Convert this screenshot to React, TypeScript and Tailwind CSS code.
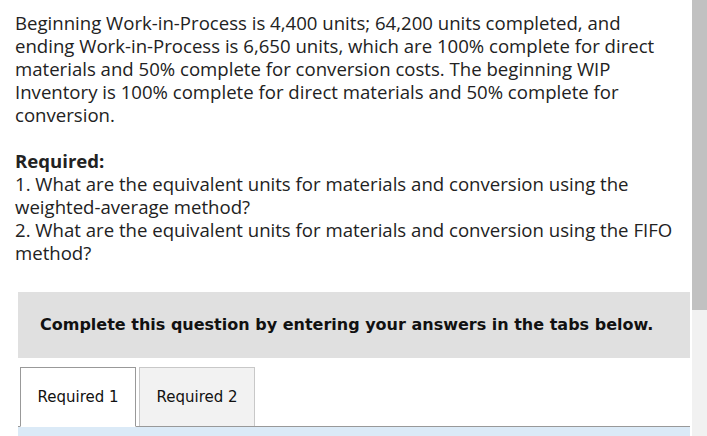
export default function App() {
  return (
    <div className="flex h-[436px] w-[707px] overflow-hidden bg-white">
      <div className="flex-1 pl-[15px] pr-[2px] pt-[11px]">
        <div className="whitespace-nowrap font-['Open_Sans',sans-serif] text-[18.6px] leading-[23px] text-[#222]">
          <p>
            Beginning Work-in-Process is 4,400 units; 64,200 units completed, and
            <br />
            ending Work-in-Process is 6,650 units, which are 100% complete for direct
            <br />
            materials and 50% complete for conversion costs. The beginning WIP
            <br />
            Inventory is 100% complete for direct materials and 50% complete for
            <br />
            conversion.
          </p>
          <p className="mt-[23px] font-bold">Required:</p>
          <p>
            1. What are the equivalent units for materials and conversion using the
            <br />
            weighted-average method?
          </p>
          <p>
            2. What are the equivalent units for materials and conversion using the FIFO
            <br />
            method?
          </p>
        </div>

        <div className="ml-[3px] mt-[28px] flex h-[66px] items-center bg-[#e0e0e0] pl-[22px] font-['DejaVu_Sans',sans-serif] text-[16px] font-bold text-[#111]">
          Complete this question by entering your answers in the tabs below.
        </div>

        <div className="ml-[3px] mt-[9px] flex border-b border-[#999] font-['DejaVu_Sans',sans-serif] text-[15px] text-[#111]">
          <div className="-mb-px ml-[2px] flex h-[60px] w-[116px] items-center justify-center border border-b-white border-[#999] bg-white">
            Required 1
          </div>
          <div className="ml-[3px] flex h-[59px] w-[116px] items-center justify-center border border-b-0 border-[#c8c8c8] bg-[#f2f2f2]">
            Required 2
          </div>
        </div>
        <div className="ml-[3px] h-[20px] bg-[#dbeaf7]" />
      </div>
      <div className="flex w-[15px] flex-col bg-[#f1f1f1]">
        <div className="h-[310px] bg-[#c1c1c1]" />
      </div>
    </div>
  );
}
